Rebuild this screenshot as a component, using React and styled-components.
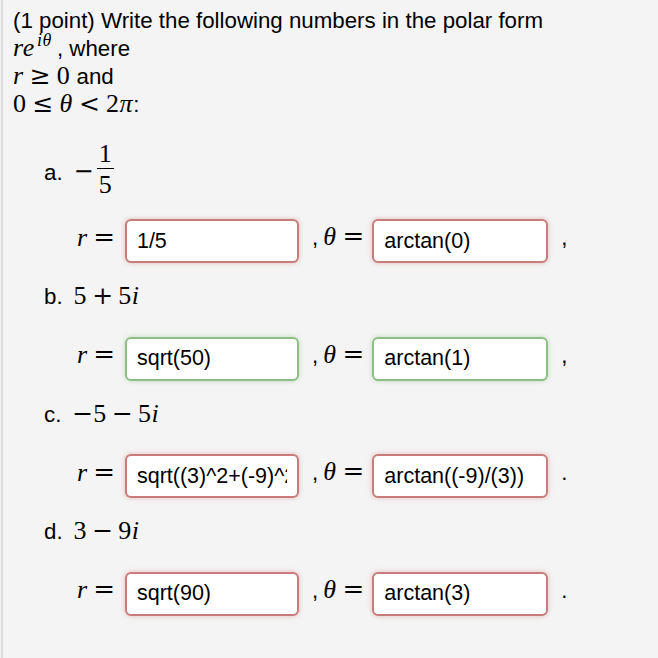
import React from "react";
import styled, { createGlobalStyle } from "styled-components";

const Global = createGlobalStyle`
  html, body { margin: 0; padding: 0; background: #f4f4f4; }
  body { font-family: "Liberation Sans", Arial, sans-serif; color: #000; }
`;

const Page = styled.div`
  box-sizing: border-box;
  min-height: 658px;
  margin-left: 1px;
  border-left: 2px solid #dedede;
  padding: 7px 0 0 10px;
  font-size: 22.3px;
  line-height: 28px;
`;

const Line = styled.div`
  height: 28px;
  white-space: nowrap;
`;

const M = styled.span`
  font-family: "Liberation Serif", "Times New Roman", serif;
  font-size: 26px;
  line-height: 0;
  letter-spacing: 0.6px;
  white-space: nowrap;
`;

const V = styled.span`
  font-style: italic;
  margin-left: ${(p) => p.$ml || 0}px;
`;

const Op = styled.span`
  font-family: "DejaVu Serif", "Liberation Serif", serif;
  font-size: ${(p) => p.$fs || 25}px;
  letter-spacing: 0;
  margin: 0 ${(p) => (p.$m == null ? 6 : p.$m)}px;
`;

const Sup = styled.span`
  font-size: 18px;
  vertical-align: 10px;
  margin-left: 2px;
  margin-right: 5px;
`;

const Head = styled.div`
  box-sizing: border-box;
  height: 57.67px;
  padding: 12px 0 0 31px;
  white-space: nowrap;
`;

const FracHead = styled.div`
  box-sizing: border-box;
  display: flex;
  align-items: center;
  height: 92px;
  padding: 9px 0 0 31px;
`;

const Label = styled.span`
  margin-right: ${(p) => p.$mr || 11}px;
  margin-top: ${(p) => p.$mt || 0}px;
`;

const Minus = styled.span`
  font-family: "DejaVu Serif", "Liberation Serif", serif;
  font-size: 24px;
  line-height: 28px;
  margin-top: 3px;
`;

const Frac = styled.span`
  display: inline-flex;
  flex-direction: column;
  align-items: center;
  margin: 0 3px 0 3px;
  font-family: "Liberation Serif", "Times New Roman", serif;
  font-size: 26px;
`;

const Num = styled.span`
  line-height: 22px;
  padding: 0 2px 3px;
`;

const Den = styled.span`
  line-height: 22px;
  padding: 5px 2px 0;
  border-top: 1px solid #000;
`;

const AnswerRow = styled.div`
  display: flex;
  align-items: center;
  height: 60px;
  padding-left: 64px;
  white-space: nowrap;
`;

const RLabel = styled.span`
  font-family: "Liberation Serif", "Times New Roman", serif;
  font-size: 26px;
  line-height: 28px;
  margin: 0 4px 8px 0;
`;

const Sep = styled.span`
  line-height: 28px;
  margin: 0 2px 6px 13px;
`;

const End = styled.span`
  line-height: 28px;
  margin: 0 0 6px 13px;
`;

const Box = styled.input`
  box-sizing: border-box;
  width: ${(p) => p.$w}px;
  height: 44px;
  padding: 0 10px;
  margin: 0;
  border: 2px solid ${(p) => (p.$ok ? "#8dbf85" : "#c97c7c")};
  border-radius: 6px;
  background: #fff;
  box-shadow: 0 0 5px
    ${(p) => (p.$ok ? "rgba(110,180,100,0.4)" : "rgba(200,100,100,0.4)")};
  font-family: "Liberation Sans", Arial, sans-serif;
  font-size: 21.5px;
  color: #000;
  outline: none;
`;

const items = [
  {
    id: "b",
    expr: (
      <>
        5<Op $m={5}>+</Op>5<V>i</V>
      </>
    ),
    r: "sqrt(50)",
    t: "arctan(1)",
    ok: true,
    end: ",",
  },
  {
    id: "c",
    expr: (
      <>
        <Op $m={0}>−</Op>5<Op $m={5}>−</Op>5<V>i</V>
      </>
    ),
    r: "sqrt((3)^2+(-9)^2)",
    t: "arctan((-9)/(3))",
    ok: false,
    end: ".",
  },
  {
    id: "d",
    expr: (
      <>
        3<Op $m={5}>−</Op>9<V>i</V>
      </>
    ),
    r: "sqrt(90)",
    t: "arctan(3)",
    ok: false,
    end: ".",
  },
];

function Answer({ r, t, ok, end }) {
  return (
    <AnswerRow>
      <RLabel>
        <V>r</V>
        <Op $fs={26}>=</Op>
      </RLabel>
      <Box $w={174} $ok={ok} defaultValue={r} readOnly />
      <Sep>
        ,
        <M>
          <V $ml={5}>θ</V>
          <Op $fs={26}>=</Op>
        </M>
      </Sep>
      <Box $w={176} $ok={ok} defaultValue={t} readOnly />
      <End>{end}</End>
    </AnswerRow>
  );
}

export default function App() {
  return (
    <>
      <Global />
      <Page>
        <Line>(1 point) Write the following numbers in the polar form</Line>
        <Line>
          <M>
            <V>re</V>
            <Sup>
              <V>iθ</V>
            </Sup>
          </M>
          , where
        </Line>
        <Line>
          <M>
            <V>r</V>
            <Op>≥</Op>0
          </M>{" "}
          and
        </Line>
        <Line>
          <M>
            0<Op>≤</Op>
            <V>θ</V>
            <Op>&lt;</Op>2<V>π</V>
          </M>
          :
        </Line>

        <FracHead>
          <Label $mt={6} $mr={11}>
            a.
          </Label>
          <Minus>−</Minus>
          <Frac>
            <Num>1</Num>
            <Den>5</Den>
          </Frac>
        </FracHead>
        <Answer r="1/5" t="arctan(0)" ok={false} end="," />

        {items.map((it) => (
          <React.Fragment key={it.id}>
            <Head>
              <Label>{it.id}.</Label>
              <M>{it.expr}</M>
            </Head>
            <Answer r={it.r} t={it.t} ok={it.ok} end={it.end} />
          </React.Fragment>
        ))}
      </Page>
    </>
  );
}
